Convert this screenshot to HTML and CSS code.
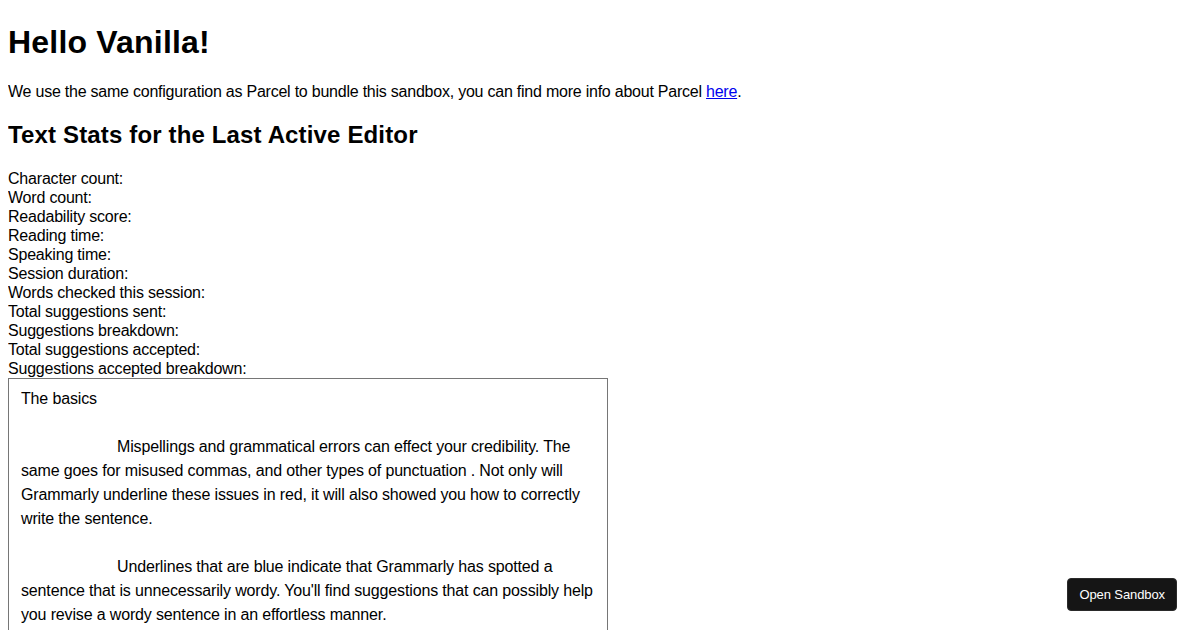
FILE: index.html
```html
<!DOCTYPE html>
<html>

<head>
    <meta charset="UTF-8">
    <title>Parcel Sandbox</title>
    <link rel="stylesheet" href="styles.css">
</head>

<body>
    <div id="app">
        <h1>Hello Vanilla!</h1>
        <div class="intro">
            We use the same configuration as Parcel to bundle this sandbox, you can find more info about Parcel
            <a href="#">here</a>.
        </div>
        <h2>Text Stats for the Last Active Editor</h2>
        <div class="stats">
            <div>Character count: <span id="charCount"></span></div>
            <div>Word count: <span id="wordCount"></span></div>
            <div>Readability score: <span id="readability"></span></div>
            <div>Reading time: <span id="readingTime"></span></div>
            <div>Speaking time: <span id="speakingTime"></span></div>
            <div>Session duration: <span id="sessionDuration"></span></div>
            <div>Words checked this session: <span id="wordsChecked"></span></div>
            <div>Total suggestions sent: <span id="suggestionsSent"></span></div>
            <div>Suggestions breakdown: <span id="suggestionsBreakdown"></span></div>
            <div>Total suggestions accepted: <span id="suggestionsAccepted"></span></div>
            <div>Suggestions accepted breakdown: <span id="acceptedBreakdown"></span></div>
        </div>
        <div class="editor" contenteditable="true">
            <p>The basics</p>
            <p><br></p>
            <p class="indent">Mispellings and grammatical errors can effect your credibility. The same goes for misused commas, and other types of punctuation . Not only will Grammarly underline these issues in red, it will also showed you how to correctly write the sentence.</p>
            <p><br></p>
            <p class="indent">Underlines that are blue indicate that Grammarly has spotted a sentence that is unnecessarily wordy. You'll find suggestions that can possibly help you revise a wordy sentence in an effortless manner.</p>
            <p><br></p>
            <p class="indent">Suggestions in green will help you write in a clear and concise manner.</p>
        </div>
    </div>
    <button class="open-sandbox">Open Sandbox</button>
</body>

</html>
```

FILE: styles.css
```css
body {
    font-family: "Liberation Sans", Arial, sans-serif;
    margin: 8px;
    color: #000;
    letter-spacing: -0.2px;
}

h1 {
    font-size: 32px;
    margin: 16px 0 22px;
    letter-spacing: 0.2px;
}

h2 {
    font-size: 24px;
    margin: 20px 0;
    letter-spacing: 0.15px;
}

.intro {
    letter-spacing: -0.23px;
}

.stats {
    line-height: 19px;
}

.editor {
    width: 600px;
    box-sizing: border-box;
    border: 1px solid #767676;
    padding: 8px 12px;
    line-height: 24px;
    letter-spacing: -0.15px;
    outline: none;
}

.editor p {
    margin: 0;
}

.editor .indent {
    text-indent: 96px;
}

.open-sandbox {
    position: fixed;
    right: 23px;
    bottom: 19px;
    background-color: #151515;
    color: #fff;
    border: 1px solid #2a2a2a;
    border-radius: 4px;
    padding: 0 11px;
    height: 33px;
    font-family: "Liberation Sans", Arial, sans-serif;
    font-size: 13px;
    letter-spacing: -0.1px;
    cursor: pointer;
}
```
